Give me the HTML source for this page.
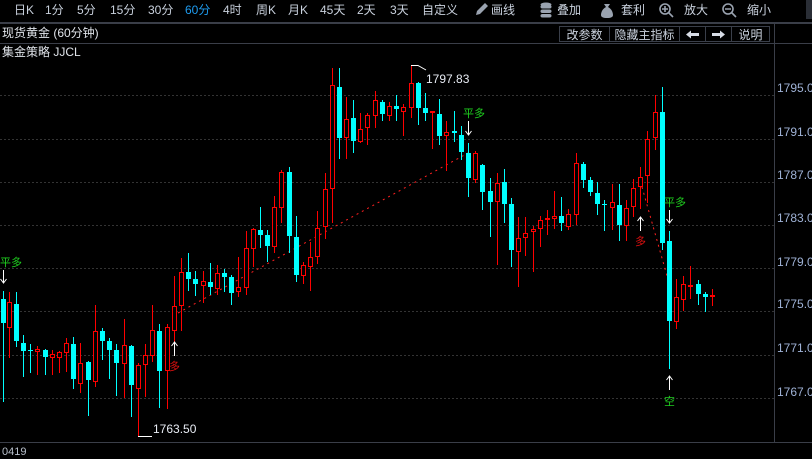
<!DOCTYPE html>
<html><head><meta charset="utf-8"><style>
body{margin:0;width:812px;height:459px;background:#000;overflow:hidden;font-family:"Liberation Sans","Noto Sans CJK SC",sans-serif;color:#c9d1dd;position:relative}
.t{position:absolute;font-size:12px;white-space:nowrap;line-height:14px}
.btn{position:absolute;top:26px;height:16px;border:1px solid #3a3f4a;font-size:12px;line-height:16px;text-align:center;color:#c9d1dd;box-sizing:border-box}
.ax{position:absolute;left:777px;font-size:12px;color:#9fb2d6;line-height:14px}
</style></head><body>
<div class="t" style="left:14px;top:3px">日K</div>
<div class="t" style="left:45px;top:3px">1分</div>
<div class="t" style="left:77px;top:3px">5分</div>
<div class="t" style="left:110px;top:3px">15分</div>
<div class="t" style="left:148px;top:3px">30分</div>
<div class="t" style="left:185px;top:3px;color:#1e9cf0">60分</div>
<div class="t" style="left:223px;top:3px">4时</div>
<div class="t" style="left:256px;top:3px">周K</div>
<div class="t" style="left:288px;top:3px">月K</div>
<div class="t" style="left:320px;top:3px">45天</div>
<div class="t" style="left:357px;top:3px">2天</div>
<div class="t" style="left:390px;top:3px">3天</div>
<div class="t" style="left:422px;top:3px">自定义</div>
<div class="t" style="left:491px;top:3px">画线</div>
<div class="t" style="left:557px;top:3px">叠加</div>
<div class="t" style="left:621px;top:3px">套利</div>
<div class="t" style="left:684px;top:3px">放大</div>
<div class="t" style="left:747px;top:3px">缩小</div>
<svg style="position:absolute;left:0;top:0" width="812" height="22">
<path d="M476 15l1-4 8-8 3 3-8 8z" fill="#9aa3b0"/>
<ellipse cx="546" cy="4.5" rx="5.5" ry="2" fill="#9aa3b0"/><rect x="540.5" y="5" width="11" height="3.5" rx="2" fill="#9aa3b0"/><rect x="540.5" y="9.5" width="11" height="3.5" rx="2" fill="#9aa3b0"/><rect x="540.5" y="14" width="11" height="3.5" rx="2" fill="#9aa3b0"/>
<path d="M604 4h6l-2 3c4 2 5 6 5 8 0 2-2 3-6 3s-6-1-6-3c0-2 1-6 5-8z" fill="#9aa3b0"/>
<circle cx="665" cy="9" r="5" fill="none" stroke="#9aa3b0" stroke-width="1.6"/><path d="M669 13l4 4M662 9h6M665 6v6" stroke="#9aa3b0" stroke-width="1.6"/>
<circle cx="728" cy="9" r="5" fill="none" stroke="#9aa3b0" stroke-width="1.6"/><path d="M732 13l4 4M725 9h6" stroke="#9aa3b0" stroke-width="1.6"/>
<rect x="806" y="0" width="6" height="19" fill="#2a2e36"/>
</svg>
<div style="position:absolute;left:0;top:22px;width:812px;height:2px;background:#3a3e48"></div>
<div class="t" style="left:2px;top:26px;color:#e0e4ea">现货黄金 (60分钟)</div>
<div class="btn" style="left:559px;width:51px">改参数</div>
<div class="btn" style="left:609px;width:71px">隐藏主指标</div>
<div class="btn" style="left:679px;width:27px"></div>
<div class="btn" style="left:705px;width:27px"></div>
<div class="btn" style="left:731px;width:39px">说明</div>
<svg style="position:absolute;left:679px;top:26px" width="54" height="17">
<path d="M7 8.5L12 4.5V7H20V10H12V12.5Z" fill="#d8dde6"/>
<path d="M46 8.5L41 4.5V7H33V10H41V12.5Z" fill="#d8dde6"/>
</svg>
<div style="position:absolute;left:0;top:43px;width:812px;height:1px;background:#3a3e48"></div>
<div class="t" style="left:2px;top:45px;color:#e0e4ea">集金策略 JJCL</div>
<div style="position:absolute;left:774px;top:24px;width:1px;height:418px;background:#3a3e48"></div>
<div style="position:absolute;left:0;top:442px;width:812px;height:1px;background:#3a3e48"></div>
<div class="t" style="left:2px;top:445px;font-size:11px;color:#b8c0cc">0419</div>
<div class="ax" style="top:81px">1795.00</div>
<div class="ax" style="top:125px">1791.00</div>
<div class="ax" style="top:168px">1787.00</div>
<div class="ax" style="top:211px">1783.00</div>
<div class="ax" style="top:255px">1779.00</div>
<div class="ax" style="top:297px">1775.00</div>
<div class="ax" style="top:341px">1771.00</div>
<div class="ax" style="top:385px">1767.00</div>
<svg style="position:absolute;left:0;top:0" width="774" height="442">
<g stroke="#333" stroke-dasharray="2,2"><path d="M0 95.5H774M0 139.5H774M0 182.5H774M0 225.5H774M0 268.5H774M0 311.5H774M0 355.5H774M0 398.5H774"/></g>
<g stroke="#ff2020" stroke-dasharray="2,4"><path d="M178 313L468 153M642 187L669 283"/></g>
<g stroke="#00ffff"><path d="M3.5 291V402M16.5 292V347M23.5 335V377M30.5 344V373M45.5 349V375M73.5 337V389M88.5 361V416M102.5 328V360M109.5 338V379M116.5 344V396M131.5 345V417M159.5 324V408M188.5 253V291M195.5 271V296M210.5 263V295M224.5 269V292M231.5 275V305M260.5 207V248M267.5 230V262M289.5 167V253M296.5 216V282M339.5 68V159M353.5 100V153M382.5 100V121M396.5 95V121M418.5 82V125M425.5 93V121M439.5 99V145M454.5 111V142M461.5 126V160M468.5 143V197M482.5 164V210M490.5 178V237M504.5 169V223M511.5 198V267M561.5 197V231M583.5 162V188M590.5 177V196M597.5 182V215M604.5 200V231M619.5 184V241M662.5 87V250M669.5 231V369M698.5 280V305M705.5 292V312"/></g>
<g fill="#00ffff">
<rect x="1" y="299" width="5" height="24"/><rect x="14" y="304" width="5" height="37"/><rect x="21" y="343" width="5" height="8"/><rect x="28" y="350" width="5" height="1"/><rect x="43" y="350" width="5" height="7"/><rect x="71" y="344" width="5" height="35"/><rect x="86" y="362" width="5" height="18"/><rect x="100" y="331" width="5" height="10"/><rect x="107" y="341" width="5" height="9"/><rect x="114" y="350" width="5" height="13"/><rect x="129" y="346" width="5" height="39"/><rect x="157" y="331" width="5" height="40"/><rect x="186" y="272" width="5" height="7"/><rect x="193" y="279" width="5" height="5"/><rect x="208" y="282" width="5" height="5"/><rect x="222" y="273" width="5" height="4"/><rect x="229" y="277" width="5" height="16"/><rect x="258" y="230" width="5" height="5"/><rect x="265" y="235" width="5" height="11"/><rect x="287" y="172" width="5" height="64"/><rect x="294" y="237" width="5" height="38"/><rect x="337" y="87" width="5" height="51"/><rect x="351" y="118" width="5" height="23"/><rect x="380" y="102" width="5" height="12"/><rect x="394" y="106" width="5" height="3"/><rect x="416" y="83" width="5" height="25"/><rect x="423" y="108" width="5" height="5"/><rect x="437" y="114" width="5" height="22"/><rect x="452" y="131" width="5" height="2"/><rect x="459" y="135" width="5" height="17"/><rect x="466" y="153" width="5" height="25"/><rect x="480" y="165" width="5" height="27"/><rect x="488" y="191" width="5" height="11"/><rect x="502" y="182" width="5" height="22"/><rect x="509" y="204" width="5" height="46"/><rect x="559" y="216" width="5" height="7"/><rect x="581" y="164" width="5" height="16"/><rect x="588" y="180" width="5" height="12"/><rect x="595" y="193" width="5" height="11"/><rect x="602" y="204" width="5" height="1"/><rect x="617" y="205" width="5" height="20"/><rect x="660" y="112" width="5" height="131"/><rect x="667" y="241" width="5" height="80"/><rect x="696" y="284" width="5" height="10"/><rect x="703" y="294" width="5" height="3"/>
</g>
<g stroke="#ff0000"><path d="M9.5 292V358M37.5 346V375M52.5 350V375M59.5 351V373M66.5 338V372M80.5 343V393M95.5 305V387M124.5 319V398M138.5 363V436M145.5 344V397M152.5 305V362M167.5 324V409M174.5 276V352M181.5 258V331M203.5 271V303M217.5 265V295M238.5 257V297M246.5 231V295M253.5 228V267M274.5 196V253M281.5 170V223M303.5 262V284M310.5 242V291M317.5 211V264M325.5 173V239M332.5 68V223M346.5 97V159M360.5 113V143M367.5 113V145M375.5 91V128M389.5 102V121M403.5 104V136M411.5 65V118M432.5 111V149M446.5 121V171M475.5 151V183M497.5 173V265M518.5 217V287M525.5 217V256M533.5 226V272M540.5 216V247M547.5 210V235M554.5 191V229M568.5 209V230M576.5 153V225M612.5 184V230M626.5 200V241M633.5 179V217M640.5 167V209M647.5 131V203M655.5 95V150M676.5 279V329M683.5 276V311M690.5 266V299M712.5 289V306"/></g>
<g stroke="#ff0000" fill="#000">
<rect x="7.5" y="302.5" width="4" height="25"/><rect x="35.5" y="349.5" width="4" height="2"/><rect x="50.5" y="354.5" width="4" height="3"/><rect x="57.5" y="352.5" width="4" height="5"/><rect x="64.5" y="343.5" width="4" height="9"/><rect x="78.5" y="363.5" width="4" height="20"/><rect x="93.5" y="331.5" width="4" height="50"/><rect x="122.5" y="345.5" width="4" height="18"/><rect x="136.5" y="365.5" width="4" height="23"/><rect x="143.5" y="355.5" width="4" height="9"/><rect x="150.5" y="330.5" width="4" height="25"/><rect x="165.5" y="327.5" width="4" height="43"/><rect x="172.5" y="306.5" width="4" height="24"/><rect x="179.5" y="272.5" width="4" height="33"/><rect x="201.5" y="281.5" width="4" height="4"/><rect x="215.5" y="273.5" width="4" height="15"/><rect x="236.5" y="287.5" width="4" height="4"/><rect x="244.5" y="248.5" width="4" height="39"/><rect x="251.5" y="229.5" width="4" height="19"/><rect x="272.5" y="207.5" width="4" height="39"/><rect x="279.5" y="172.5" width="4" height="35"/><rect x="301.5" y="265.5" width="4" height="10"/><rect x="308.5" y="257.5" width="4" height="9"/><rect x="315.5" y="228.5" width="4" height="28"/><rect x="323.5" y="189.5" width="4" height="37"/><rect x="330.5" y="85.5" width="4" height="103"/><rect x="344.5" y="119.5" width="4" height="18"/><rect x="358.5" y="129.5" width="4" height="12"/><rect x="365.5" y="115.5" width="4" height="12"/><rect x="373.5" y="100.5" width="4" height="15"/><rect x="387.5" y="106.5" width="4" height="9"/><rect x="401.5" y="107.5" width="4" height="4"/><rect x="409.5" y="83.5" width="4" height="24"/><rect x="430.5" y="111.5" width="4" height="1"/><rect x="444.5" y="132.5" width="4" height="3"/><rect x="473.5" y="153.5" width="4" height="26"/><rect x="495.5" y="183.5" width="4" height="18"/><rect x="516.5" y="238.5" width="4" height="13"/><rect x="523.5" y="233.5" width="4" height="4"/><rect x="531.5" y="229.5" width="4" height="2"/><rect x="538.5" y="220.5" width="4" height="8"/><rect x="545.5" y="218.5" width="4" height="1"/><rect x="552.5" y="216.5" width="4" height="2"/><rect x="566.5" y="214.5" width="4" height="12"/><rect x="574.5" y="163.5" width="4" height="51"/><rect x="610.5" y="202.5" width="4" height="5"/><rect x="624.5" y="208.5" width="4" height="17"/><rect x="631.5" y="188.5" width="4" height="18"/><rect x="638.5" y="177.5" width="4" height="9"/><rect x="645.5" y="139.5" width="4" height="36"/><rect x="653.5" y="112.5" width="4" height="25"/><rect x="674.5" y="297.5" width="4" height="24"/><rect x="681.5" y="284.5" width="4" height="15"/><rect x="688.5" y="285.5" width="4" height="1"/><rect x="710.5" y="295.5" width="4" height="1"/>
</g>
<g stroke="#fff" fill="none">
<path d="M3.5 270V283M0.5 279l3 4 3-4"/>
<path d="M174.5 342V356M171.5 346l3-4 3 4"/>
<path d="M468.5 121V135M465.5 131l3 4 3-4"/>
<path d="M640.5 217V231M637.5 221l3-4 3 4"/>
<path d="M669.5 210V223M666.5 219l3 4 3-4"/>
<path d="M669.5 376V390M666.5 380l3-4 3 4"/>
<path d="M411 65.5H418L426 70"/>
<path d="M138 436.5H152"/>
</g>
<g font-family="Liberation Sans,Noto Sans CJK SC,sans-serif" font-size="11">
<text x="0" y="266" fill="#1fd01f">平多</text>
<text x="463" y="117" fill="#1fd01f">平多</text>
<text x="664" y="206" fill="#1fd01f">平多</text>
<text x="664" y="405" fill="#1fd01f">空</text>
<text x="169" y="370" fill="#e01010">多</text>
<text x="635" y="245" fill="#e01010">多</text>
<text x="426" y="83" fill="#e8ecf4" font-size="12">1797.83</text>
<text x="153" y="433" fill="#e8ecf4" font-size="12">1763.50</text>
</g>
</svg>
</body></html>
